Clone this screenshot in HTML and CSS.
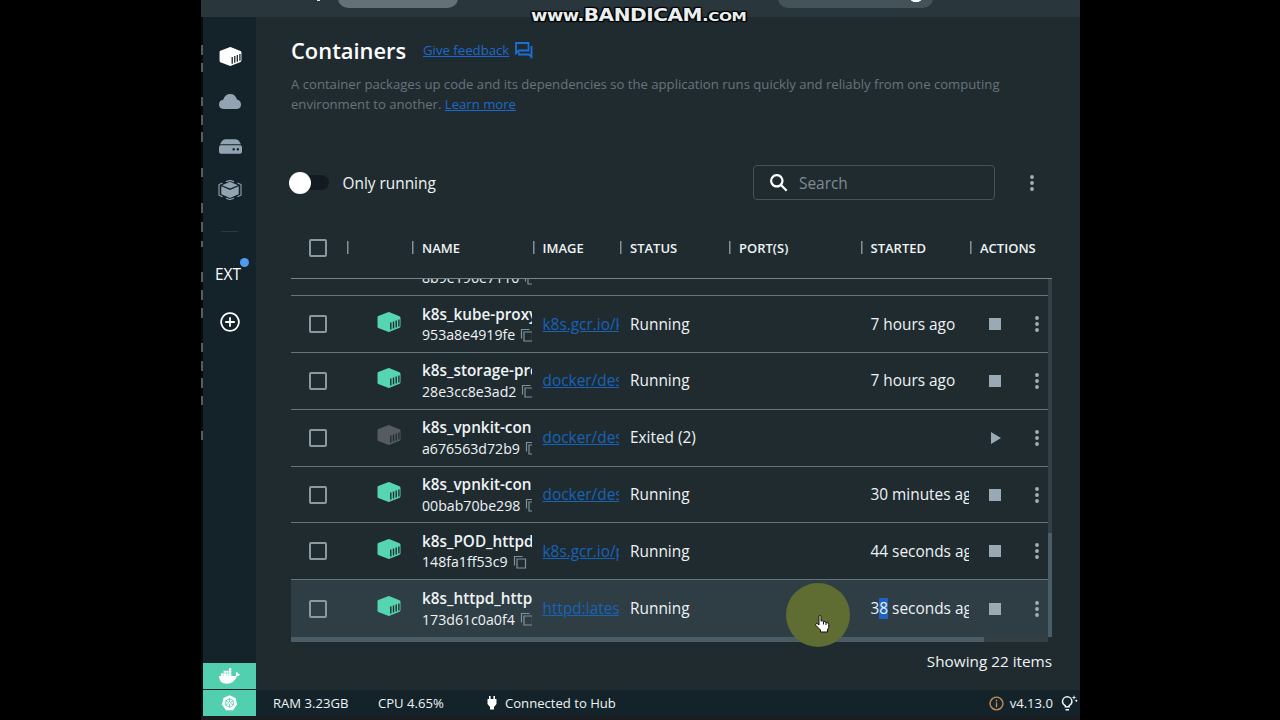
FILE: index.html
```html
<!DOCTYPE html>
<html lang="en">

<head>
    <meta charset="UTF-8">
    <title>Docker Desktop</title>
    <link rel="stylesheet" href="styles.css">
</head>

<body>
    <!-- Shared icons -->
    <svg class="defs">
        <symbol id="container" viewBox="0 0 24 20">
            <path fill="currentColor" d="M12 0L22.500 4.200Q23.500 4.700 23.500 5.800V14.300Q23.500 15.300 22.600 15.700L12.500 19.800Q11.800 20.100 11 19.800L1.300 16Q.5 15.600.5 14.700V5Q.5 4.200 1.300 3.900L11 .2Q11.500 0 12 0Z" />
            <path class="slats" d="M13.800 10.400V17.500M16.500 9.400V16.500M19.200 8.400V15.500M21.900 7.400V14.500" />
        </symbol>
        <symbol id="copy" viewBox="0 0 14 14">
            <path fill="none" stroke="currentColor" stroke-width="1.200" d="M1.500 10.500V1.500H9.500M4 4H12.500V13H4Z" />
        </symbol>
        <symbol id="dots" viewBox="0 0 4 16">
            <g fill="currentColor">
                <circle cx="2" cy="2" r="1.900" />
                <circle cx="2" cy="8" r="1.900" />
                <circle cx="2" cy="14" r="1.900" />
            </g>
        </symbol>
    </svg>

    <div class="window">
        <header class="topbar">
            <i class="tick"></i>
            <span class="pill"></span>
            <span class="pill user"></span>
        </header>
        <div class="watermark">www.<b>BANDICAM</b>.<small>COM</small></div>

        <div class="middle">
            <svg class="edge" viewBox="0 0 2 699">
                <path d="M1 28v10M1 46v9M1 80v9M1 98v10M1 115v10M1 151v9M1 186v10M1 205v10M1 224v6M1 255v10M1 273v10M1 291v10M1 326v9M1 344v10M1 361v10M1 379v9M1 414v9" />
            </svg>
            <nav class="sidebar">
                <svg class="nav-box"><use href="#container" /></svg>
                <svg class="nav-cloud" viewBox="0 0 22 15">
                    <path d="M4.500 15Q0 14.600 0 10.500Q0 6.500 4.200 5.800Q6 0 11.300 0Q16.500 0 18 5.600Q22 6.600 22 10.500Q22 14.600 18 15Z" />
                </svg>
                <svg class="nav-disk" viewBox="0 0 22 14">
                    <path d="M6 0H16Q17.500 0 19 1.500L21 4.800H1L3 1.500Q4.500 0 6 0Z" />
                    <path fill-rule="evenodd" d="M1 5.800H21L22 7.500V12Q22 14 20 14H2Q0 14 0 12V7.500ZM14 8.500a1.200 1.200 0 1 0 .1 0ZM18 8.500a1.200 1.200 0 1 0 .1 0Z" />
                </svg>
                <svg class="nav-images" viewBox="0 0 24 20">
                    <path d="M12 1.800L20 5.200L12 8.600L4 5.200ZM3.300 6.300L12 10L20.700 6.300V14.200L12 18L3.300 14.200Z" />
                    <path class="wire" d="M8 1.600L12 .4L16 1.600M19.500 3L23 4.500V15.200L19.500 16.800M16 18.300L12 19.600L8 18.300M4.500 16.800L1 15.200V4.500L4.500 3" />
                </svg>
                <hr>
                <div class="ext">EXT<i></i></div>
                <svg class="nav-add" viewBox="0 0 20 20">
                    <path d="M10 1.200a8.800 8.800 0 1 0 .01 0ZM10 5.200V14.800M5.200 10H14.800" />
                </svg>
                <div class="engine"><svg viewBox="0 0 22 16">
                    <path d="M0 8H16.500Q17.500 8 17.800 7Q17 5 18.500 3.500Q20 4.500 20 5.700Q21.200 5.500 22 6.200Q21 8.300 18.800 8.300Q16 16 8 16Q0 16 0 8ZM2 5h2.500v3H2ZM4.800 5h2.500v3H4.800ZM7.600 5h2.500v3H7.600ZM10.400 5h2.500v3H10.400ZM4.800 2.400h2.500v2.300H4.800ZM7.600 2.400h2.500v2.300H7.600ZM10.400 2.400h2.500v2.300H10.400ZM10.400 0h2.500v2.200H10.400Z" />
                </svg></div>
                <div class="engine kube"><svg viewBox="0 0 16 16">
                    <path d="M8 .2L14 3L15.600 9.500L11.500 15.300H4.500L.4 9.500L2 3Z" />
                    <path class="wheel" d="M8 4a4 4 0 1 0 .01 0ZM8 2.800V7M8 9V12.500M3.800 5.300L7.200 7.500M12.200 5.300L8.800 7.500M3.500 9.800L7 8.500M12.500 9.800L9 8.500" />
                </svg></div>
            </nav>

            <div class="page">
                <main>
                    <div class="title">
                        <h1>Containers</h1>
                        <a>Give feedback</a>
                        <svg viewBox="0 0 18 17">
                            <path d="M1 1H13.500V8.500H4L1 11.300ZM16.500 4V15L14 12.500H4V10.500" />
                        </svg>
                    </div>
                    <p class="about">A container packages up code and its dependencies so the application runs quickly and reliably from one computing<br>environment to another. <a>Learn more</a></p>

                    <div class="tools">
                        <span class="switch"></span>
                        <span class="switch-label">Only running</span>
                        <div class="search">
                            <svg viewBox="0 0 18 18">
                                <path d="M6.800 1.200a5.600 5.600 0 1 0 .01 0ZM10.800 10.800L16.700 16.700" />
                            </svg>
                            <span>Search</span>
                        </div>
                        <svg class="dots"><use href="#dots" /></svg>
                    </div>

                    <div class="row head">
                        <span><i class="check"></i></span>
                        <span></span>
                        <span>NAME</span>
                        <span>IMAGE</span>
                        <span>STATUS</span>
                        <span>PORT(S)</span>
                        <span>STARTED</span>
                        <span>ACTIONS</span>
                    </div>

                    <div class="table">
                        <div class="rows">
                            <div class="row">
                                <span></span>
                                <span></span>
                                <span class="name"><b></b><small>8b9e196e7110 <svg><use href="#copy" /></svg></small></span>
                            </div>
                            <div class="row">
                                <span><i class="check"></i></span>
                                <span><svg class="box"><use href="#container" /></svg></span>
                                <span class="name"><b>k8s_kube-proxy</b><small>953a8e4919fe <svg><use href="#copy" /></svg></small></span>
                                <span><a>k8s.gcr.io/k</a></span>
                                <span>Running</span>
                                <span></span>
                                <span>7 hours ago</span>
                                <span class="actions"><i class="stop"></i><svg class="dots"><use href="#dots" /></svg></span>
                            </div>
                            <div class="row">
                                <span><i class="check"></i></span>
                                <span><svg class="box"><use href="#container" /></svg></span>
                                <span class="name"><b>k8s_storage-pro</b><small>28e3cc8e3ad2 <svg><use href="#copy" /></svg></small></span>
                                <span><a>docker/desk</a></span>
                                <span>Running</span>
                                <span></span>
                                <span>7 hours ago</span>
                                <span class="actions"><i class="stop"></i><svg class="dots"><use href="#dots" /></svg></span>
                            </div>
                            <div class="row">
                                <span><i class="check"></i></span>
                                <span><svg class="box exited"><use href="#container" /></svg></span>
                                <span class="name"><b>k8s_vpnkit-con</b><small>a676563d72b9 <svg><use href="#copy" /></svg></small></span>
                                <span><a>docker/desk</a></span>
                                <span>Exited (2)</span>
                                <span></span>
                                <span></span>
                                <span class="actions"><i class="play"></i><svg class="dots"><use href="#dots" /></svg></span>
                            </div>
                            <div class="row">
                                <span><i class="check"></i></span>
                                <span><svg class="box"><use href="#container" /></svg></span>
                                <span class="name"><b>k8s_vpnkit-con</b><small>00bab70be298 <svg><use href="#copy" /></svg></small></span>
                                <span><a>docker/desk</a></span>
                                <span>Running</span>
                                <span></span>
                                <span>30 minutes ago</span>
                                <span class="actions"><i class="stop"></i><svg class="dots"><use href="#dots" /></svg></span>
                            </div>
                            <div class="row">
                                <span><i class="check"></i></span>
                                <span><svg class="box"><use href="#container" /></svg></span>
                                <span class="name"><b>k8s_POD_httpd</b><small>148fa1ff53c9 <svg><use href="#copy" /></svg></small></span>
                                <span><a>k8s.gcr.io/pa</a></span>
                                <span>Running</span>
                                <span></span>
                                <span>44 seconds ago</span>
                                <span class="actions"><i class="stop"></i><svg class="dots"><use href="#dots" /></svg></span>
                            </div>
                            <div class="row hover">
                                <span><i class="check"></i></span>
                                <span><svg class="box"><use href="#container" /></svg></span>
                                <span class="name"><b>k8s_httpd_http</b><small>173d61c0a0f4 <svg><use href="#copy" /></svg></small></span>
                                <span><a>httpd:latest</a></span>
                                <span>Running</span>
                                <span></span>
                                <span>3<mark>8</mark> seconds ago</span>
                                <span class="actions"><i class="stop"></i><svg class="dots"><use href="#dots" /></svg></span>
                            </div>
                        </div>
                        <div class="vscroll"><i></i></div>
                        <div class="hscroll"><i></i></div>
                    </div>
                    <p class="count">Showing 22 items</p>
                </main>

                <footer>
                    <span class="ram">RAM 3.23GB</span>
                    <span class="cpu">CPU 4.65%</span>
                    <svg class="plug" viewBox="0 0 10 14">
                        <path d="M2 0H3.600V3H6.400V0H8V3H9.500V8L7 11V13.500H3V11L.5 8V3H2Z" />
                    </svg>
                    <span>Connected to Hub</span>
                    <svg class="info" viewBox="0 0 16 16">
                        <path d="M8 1.200a6.800 6.800 0 1 0 .01 0ZM8 4V5.800M8 7V12" />
                    </svg>
                    <span class="version">v4.13.0</span>
                    <svg class="bulb" viewBox="0 0 17 17">
                        <path d="M4.300 11.800V10.600Q1.500 9.200 1.500 6.500A4.700 4.700 0 0 1 10.900 6.500Q10.900 9.200 8.100 10.600V11.800ZM4.500 14.800H8" />
                        <path class="spark" d="M13 0L13.600 1.900L15.500 2.500L13.600 3.100L13 5L12.400 3.100L10.500 2.500L12.400 1.900ZM15.300 4.500L16.600 5.700L15.300 7L14 5.700Z" />
                    </svg>
                </footer>
            </div>
        </div>

        <div class="pointer">
            <svg viewBox="0 0 15 18">
                <path d="M4 1.500Q4 .5 5 .5T6 1.500V6Q8 5.300 8.500 6.700Q10.200 6 11 7.500Q13.500 7 13.700 9.500V12.500L12.500 15V17H5.500V15L1 10.500Q.2 9 1.500 8.500Q2.800 8.500 4 10Z" />
                <path d="M8.500 6.700V9.500M11 7.500V10" />
            </svg>
        </div>
    </div>
</body>

</html>
```
FILE: styles.css
```css
* {
    box-sizing: border-box;
    margin: 0;
    padding: 0;
}

body {
    height: 720px;
    overflow: hidden;
    background: #000;
    color: #eef3f5;
    font-family: "Open Sans", sans-serif;
    font-size: 15.4px;
}

svg,
i {
    display: block;
    flex: none;
}

a {
    color: #1f68cb;
    text-decoration: underline;
}

.defs {
    position: absolute;
    width: 0;
    height: 0;
}

.window {
    position: relative;
    display: flex;
    flex-direction: column;
    width: 879px;
    height: 720px;
    margin-left: 201px;
    background: #1b1e20;
}

/* Title bar */
.topbar {
    display: flex;
    height: 17px;
    overflow: hidden;
    background: #29363b;
}

.tick {
    width: 3px;
    height: 1px;
    margin-left: 116px;
    background: #dfe5e7;
}

.pill {
    width: 120px;
    height: 20px;
    margin: -12px 0 0 18px;
    border-radius: 10px;
    background: #647176;
}

.pill.user {
    width: 155px;
    margin-left: 320px;
    background: radial-gradient(circle at 138px 7px, #fff 7px, #445359 7.5px);
}

.watermark {
    position: absolute;
    left: 330px;
    top: 5px;
    transform: scaleX(1.18);
    transform-origin: left;
    color: #e9eff0;
    font: bold 15px/20px "DejaVu Sans", sans-serif;
    letter-spacing: -0.4px;
    white-space: nowrap;
    text-shadow: 1px 1px 1px #000, -1px -1px 1px #000, 1px -1px 1px #000, -1px 1px 1px #000;
}

.watermark b {
    font-size: 17px;
}

.watermark small {
    font-size: 13px;
}

.middle {
    display: flex;
    height: 699px;
}

.edge {
    width: 2px;
    height: 699px;
    background: #070b0d;
}

.edge path {
    stroke: #8d9496;
    stroke-width: 1.2;
}

/* Sidebar */
.sidebar {
    display: flex;
    flex-direction: column;
    align-items: center;
    width: 53px;
    background: #14232a;
    color: #fff;
    fill: #92a4b2;
}

.nav-box {
    width: 23px;
    height: 19px;
    margin: 30px 0 0 1px;
}

.slats {
    stroke: #1f2c32;
    stroke-width: 1.4;
}

.nav-cloud {
    width: 22px;
    height: 15px;
    margin: 28px 0 0 1px;
}

.nav-disk {
    width: 23px;
    height: 15px;
    margin: 30px 0 0 1px;
}

.nav-images {
    width: 24px;
    height: 20px;
    margin: 26px 0 0 1px;
}

.wire {
    fill: none;
    stroke: #92a4b2;
    stroke-width: 1.1;
}

.sidebar hr {
    width: 17px;
    height: 1px;
    margin-top: 31px;
    border: 0;
    background: #2b3a41;
}

.ext {
    position: relative;
    margin: 30px 3px 0 0;
    font-size: 15.5px;
    line-height: 24px;
}

.ext i {
    position: absolute;
    left: 25px;
    top: -4px;
    width: 9px;
    height: 9px;
    border-radius: 50%;
    background: #4f9df0;
}

.nav-add {
    width: 20px;
    height: 20px;
    margin-top: 26px;
    fill: none;
    stroke: #fff;
    stroke-width: 1.8;
}

.engine {
    display: flex;
    align-items: center;
    justify-content: center;
    width: 53px;
    height: 26px;
    margin-top: auto;
    background: #51cfae;
    fill: #fff;
}

.engine svg {
    width: 21px;
    height: 16px;
}

.engine.kube {
    margin-top: 1px;
}

.wheel {
    fill: none;
    stroke: #51cfae;
    stroke-width: 0.8;
}

/* Containers page */
.page {
    display: flex;
    flex: 1;
    flex-direction: column;
    background: #202b30;
}

main {
    flex: 1;
    padding: 16px 28px 0 35px;
}

.title {
    display: flex;
    align-items: center;
    height: 34px;
}

.title h1 {
    width: 132px;
    color: #fff;
    font-size: 21.9px;
    font-weight: 600;
}

.title a {
    width: 92px;
    font-size: 13.2px;
    white-space: nowrap;
}

.title svg {
    width: 18px;
    height: 17px;
    fill: none;
    stroke: #1d6fd8;
    stroke-width: 1.8;
}

.about {
    margin-top: 8px;
    color: #68737a;
    font-size: 13.13px;
    line-height: 19.5px;
    white-space: nowrap;
}

.tools {
    display: flex;
    align-items: center;
    height: 35px;
    margin-top: 51px;
}

.switch {
    width: 38px;
    height: 15px;
    border-radius: 8px;
    background: #141b20;
}

.switch::before {
    content: "";
    display: block;
    width: 22px;
    height: 22px;
    margin: -3.5px 0 0 -2px;
    border-radius: 50%;
    background: #fff;
}

.switch-label {
    margin-left: 13.5px;
    padding-top: 1px;
}

.search {
    display: flex;
    align-items: center;
    gap: 11px;
    width: 242px;
    height: 35px;
    margin: 0 35px 0 auto;
    padding: 0 0 0 16px;
    border: 1px solid #475359;
    border-radius: 4px;
    color: #7f8b91;
}

.search span {
    padding-top: 1px;
}

.search svg {
    width: 18px;
    height: 18px;
    fill: none;
    stroke: #fff;
    stroke-width: 2.2;
}

.dots {
    width: 4px;
    height: 16px;
    color: #a3b0b7;
}

.tools .dots {
    margin-right: 18px;
}

/* Table */
.row {
    display: grid;
    flex: none;
    grid-template-columns: 56px 65px 120.5px 87.5px 109px 131.5px 109.5px 78px;
    align-items: center;
    width: 757px;
    height: 56.8px;
    border-bottom: 1.5px solid #63747b;
}

.row > span {
    padding-left: 10px;
    overflow: hidden;
    white-space: nowrap;
}

.row > span:nth-child(-n+7) {
    margin-right: 1px;
}

.head {
    align-items: start;
    height: 78px;
    padding-top: 39px;
    border: 0;
    font-size: 13px;
    font-weight: 600;
}

.head > span {
    height: 18px;
    line-height: 18px;
}

.head > span:nth-child(n+2) {
    background: linear-gradient(#83929a, #83929a) left 2px / 1.5px 13px no-repeat;
}

.check {
    width: 18px;
    height: 18px;
    margin-left: 8px;
    border: 2px solid #8999a2;
    border-radius: 2px;
}

.rows a {
    color: #1763b8;
}

.table {
    display: grid;
    grid-template: 358px 5px / 757px 4px;
    border-top: 1px solid #75838a;
}

.rows {
    display: flex;
    flex-direction: column;
    justify-content: flex-end;
    overflow: hidden;
}

.rows .row:last-child {
    border: 0;
}

.row.hover {
    background: #2f3d44;
}

.box {
    width: 24px;
    height: 20px;
    margin: 0 0 5px 20px;
    color: #55d6b1;
}

.box.exited {
    color: #555b5e;
}

.name b,
.name small {
    display: flex;
    align-items: center;
    height: 21px;
    font-size: 15.3px;
    font-weight: 600;
}

.name small {
    gap: 5px;
    font-size: 14.15px;
    font-weight: 400;
}

.name small svg {
    width: 14px;
    height: 14px;
    color: #81919a;
}

mark {
    padding: 2px 0;
    background: #1d62c0;
    color: inherit;
}

.actions {
    display: flex;
    align-items: center;
    justify-content: space-between;
    padding-right: 9px;
}

.row > .actions {
    padding-left: 19px;
}

.stop {
    width: 12px;
    height: 12px;
    background: #9aaab5;
}

.play {
    margin-left: 2px;
    border: solid transparent;
    border-width: 6.5px 0 6.5px 10px;
    border-left-color: #9aaab5;
}

.vscroll {
    display: flex;
    align-items: flex-end;
    background: #344047;
}

.vscroll i {
    width: 4px;
    height: 104px;
    background: #4a5d67;
}

.hscroll {
    background: #333f42;
}

.hscroll i {
    width: 693px;
    height: 5px;
    background: #4a5d67;
}

.count {
    margin-top: 8px;
    font-size: 15.3px;
    text-align: right;
    line-height: 22px;
}

/* Status bar */
footer {
    display: flex;
    align-items: center;
    height: 26px;
    padding: 0 2px 0 17px;
    background: #14232a;
    font-size: 13.1px;
}

.ram {
    width: 105px;
}

.cpu {
    width: 109px;
}

.plug {
    width: 10px;
    height: 14px;
    margin-right: 8px;
    fill: #fff;
}

.info {
    width: 15px;
    height: 15px;
    margin: 0 6px 0 auto;
    fill: none;
    stroke: #c58a55;
    stroke-width: 1.5;
}

.bulb {
    width: 17px;
    height: 17px;
    margin-left: 8px;
    fill: none;
    stroke: #eef3f5;
    stroke-width: 1.5;
}

.spark {
    fill: #eef3f5;
    stroke: none;
}

/* Click highlight */
.pointer {
    position: absolute;
    left: 585px;
    top: 583px;
    width: 64px;
    height: 64px;
    border-radius: 50%;
    background: #5f6c32;
}

.pointer svg {
    width: 15px;
    height: 18px;
    margin: 32px 0 0 29px;
    fill: #fff;
    stroke: #111;
}
```
